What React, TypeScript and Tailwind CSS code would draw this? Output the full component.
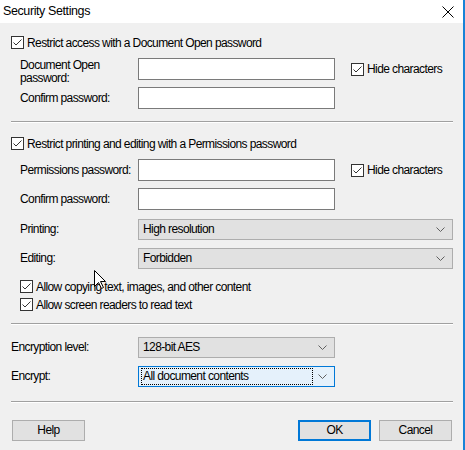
import React from 'react';

const font = { fontFamily: '"Liberation Sans", Arial, sans-serif' };

const Check: React.FC = () => (
  <span className="w-[13px] h-[13px] shrink-0 border border-[#333333] bg-white flex items-center justify-center">
    <svg width="11" height="11" viewBox="0 0 11 11">
      <path d="M1.5 5.5 L4 8 L9.5 2.5" fill="none" stroke="#333333" strokeWidth="1" />
    </svg>
  </span>
);

const CheckRow: React.FC<{ label: string; className?: string }> = ({ label, className }) => (
  <div className={`flex items-center h-[15px] gap-[3px] whitespace-nowrap ${className ?? ''}`}>
    <Check />
    <span className="leading-none">{label}</span>
  </div>
);

const Chevron: React.FC = () => (
  <svg width="9" height="5" viewBox="0 0 9 5" className="shrink-0">
    <path d="M0.5 0.5 L4.5 4.5 L8.5 0.5" fill="none" stroke="#606060" strokeWidth="1" />
  </svg>
);

const Select: React.FC<{ value: string; width: string; focused?: boolean }> = ({ value, width, focused }) =>
  focused ? (
    <div className={`${width} h-[21px] shrink-0 border border-[#0078d7] bg-[#e5f1fb] flex items-center pl-[2px] pr-[7px]`}>
      <div className="flex-1 h-[17px] border border-dotted border-black flex items-center pl-[1px] mr-[5px]">
        {value}
      </div>
      <Chevron />
    </div>
  ) : (
    <div className={`${width} h-[21px] shrink-0 border border-[#adadad] bg-[#e1e1e1] flex items-center pl-[4px] pr-[7px]`}>
      <span className="flex-1">{value}</span>
      <Chevron />
    </div>
  );

const Input: React.FC = () => <div className="w-[197px] h-[22px] border border-[#7a7a7a] bg-white shrink-0" />;

const Separator: React.FC<{ className?: string }> = ({ className }) => (
  <div className={`h-[2px] border-t border-[#a0a0a0] border-b border-b-white ${className ?? ''}`} />
);

export default function App() {
  return (
    <div
      className="relative w-[465px] h-[450px] bg-[#f0f0f0] text-[12px] tracking-[-0.6px] leading-[15px] text-black border-r-2 border-r-[#1883d7] flex flex-col overflow-hidden"
      style={font}
    >
      <div className="h-[23px] bg-white flex items-center justify-between pl-[3px] pr-[9px] shrink-0">
        <span className="text-[12.5px] tracking-[-0.4px]">Security Settings</span>
        <svg width="12" height="12" viewBox="0 0 12 12">
          <path d="M0.5 0.5 L11.5 11.5 M11.5 0.5 L0.5 11.5" stroke="#000" strokeWidth="1" />
        </svg>
      </div>

      <div className="flex flex-col pl-[11px] pr-[10px] whitespace-nowrap">
        <CheckRow label="Restrict access with a Document Open password" className="mt-[12px]" />

        <div className="flex h-[22px] mt-[8px] pl-[9px]">
          <div className="w-[118px] leading-[13px] pt-[1px]">
            Document Open
            <br />
            password:
          </div>
          <Input />
          <CheckRow label="Hide characters" className="ml-[16px] self-center" />
        </div>
        <div className="flex items-center h-[22px] mt-[7px] pl-[9px]">
          <div className="w-[118px]">Confirm password:</div>
          <Input />
        </div>

        <Separator className="mt-[12px]" />

        <CheckRow label="Restrict printing and editing with a Permissions password" className="mt-[13px]" />

        <div className="flex items-center h-[22px] mt-[8px] pl-[9px]">
          <div className="w-[118px]">Permissions password:</div>
          <Input />
          <CheckRow label="Hide characters" className="ml-[16px]" />
        </div>
        <div className="flex items-center h-[22px] mt-[7px] pl-[9px]">
          <div className="w-[118px]">Confirm password:</div>
          <Input />
        </div>
        <div className="flex items-center h-[21px] mt-[9px] pl-[9px]">
          <div className="w-[118px]">Printing:</div>
          <Select value="High resolution" width="w-[315px]" />
        </div>
        <div className="flex items-center h-[21px] mt-[8px] pl-[9px]">
          <div className="w-[118px]">Editing:</div>
          <Select value="Forbidden" width="w-[315px]" />
        </div>

        <div className="pl-[9px] flex flex-col">
          <CheckRow label="Allow copying text, images, and other content" className="mt-[10px]" />
          <CheckRow label="Allow screen readers to read text" className="mt-[3px]" />
        </div>

        <Separator className="mt-[11px]" />

        <div className="flex items-center h-[21px] mt-[12px]">
          <div className="w-[127px]">Encryption level:</div>
          <Select value="128-bit AES" width="w-[197px]" />
        </div>
        <div className="flex items-center h-[21px] mt-[8px]">
          <div className="w-[127px]">Encrypt:</div>
          <Select value="All document contents" width="w-[197px]" focused />
        </div>

        <Separator className="mt-[14px]" />

        <div className="flex items-center mt-[17px] pl-[1px] pr-[1px]">
          <button className="w-[73px] h-[21px] border border-[#adadad] bg-[#e1e1e1]">Help</button>
          <div className="flex-1" />
          <button className="w-[73px] h-[21px] border-2 border-[#0078d7] bg-[#e1e1e1]">OK</button>
          <button className="w-[73px] h-[21px] border border-[#adadad] bg-[#e1e1e1] ml-[8px]">Cancel</button>
        </div>
      </div>

      <svg
        width="13"
        height="20"
        viewBox="0 0 13 20"
        className="absolute left-[94px] top-[270px] pointer-events-none"
      >
        <path
          d="M0.5 0.5 L0.5 16.5 L4.5 12.5 L7.5 18.5 L9.5 17.5 L6.5 11.5 L11.5 11.5 Z"
          fill="#fff"
          stroke="#000"
          strokeWidth="1"
        />
      </svg>
    </div>
  );
}
